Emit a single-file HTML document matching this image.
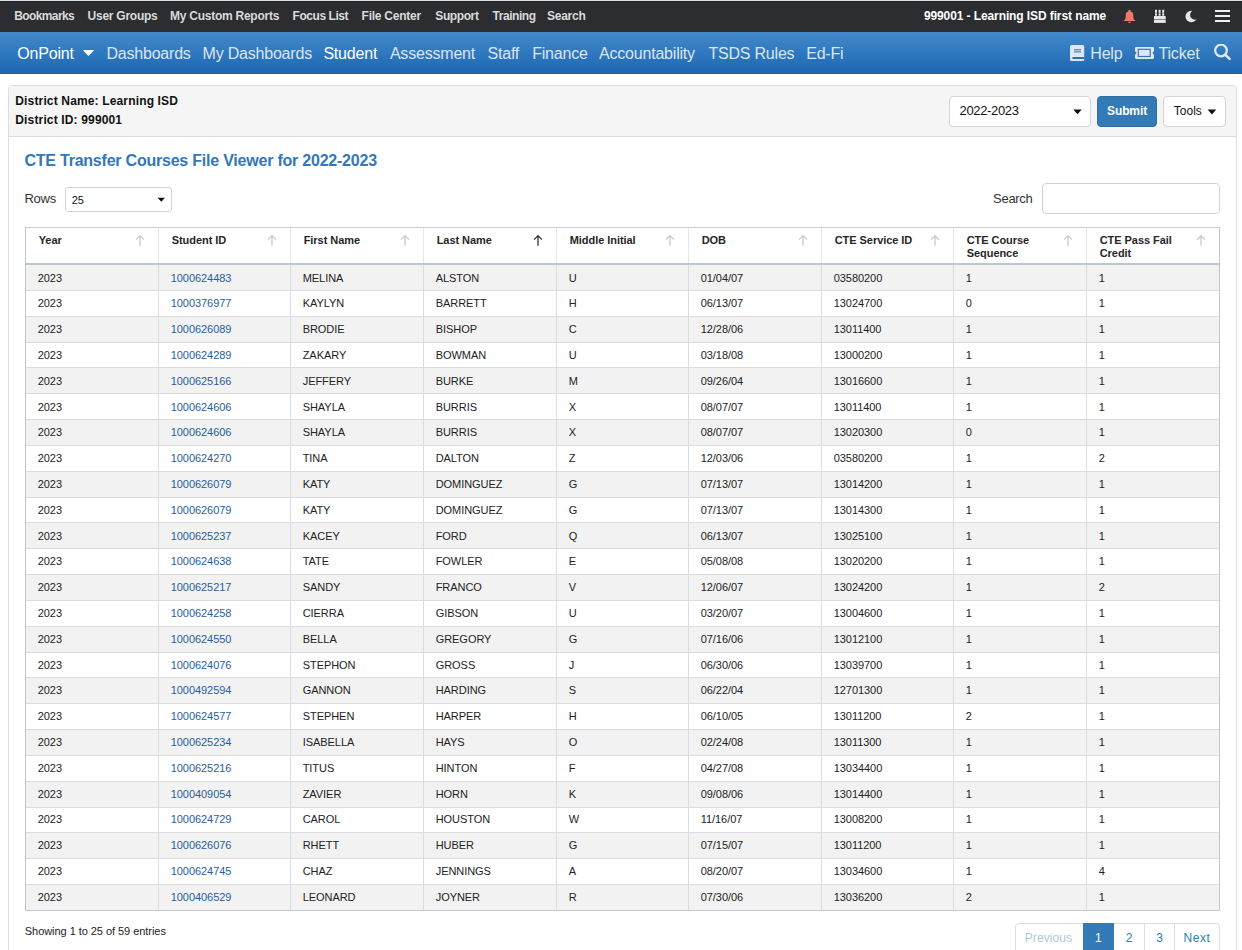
<!DOCTYPE html><html><head><meta charset="utf-8"><style>
html,body{margin:0;padding:0;}
body{width:1242px;height:950px;overflow:hidden;position:relative;background:#fff;font-family:"Liberation Sans",sans-serif;}
.t{position:absolute;white-space:pre;}
.r{position:absolute;box-sizing:border-box;}
svg{position:absolute;}
</style></head><body>
<div class="r" style="left:0px;top:0px;width:1242px;height:1px;background:#e1e1e1"></div>
<div class="r" style="left:0px;top:1px;width:1242px;height:1px;background:#222327"></div>
<div class="r" style="left:0px;top:2px;width:1242px;height:30px;background:#2c2d31"></div>
<div class="t" style="left:14.2px;top:9px;font-size:12px;line-height:14px;font-weight:700;color:#dadada;letter-spacing:-0.6px;">Bookmarks</div>
<div class="t" style="left:87.6px;top:9px;font-size:12px;line-height:14px;font-weight:700;color:#dadada;letter-spacing:-0.25px;">User Groups</div>
<div class="t" style="left:170.0px;top:9px;font-size:12px;line-height:14px;font-weight:700;color:#dadada;letter-spacing:-0.25px;">My Custom Reports</div>
<div class="t" style="left:292.6px;top:9px;font-size:12px;line-height:14px;font-weight:700;color:#dadada;letter-spacing:-0.45px;">Focus List</div>
<div class="t" style="left:361.6px;top:9px;font-size:12px;line-height:14px;font-weight:700;color:#dadada;letter-spacing:-0.25px;">File Center</div>
<div class="t" style="left:435.3px;top:9px;font-size:12px;line-height:14px;font-weight:700;color:#dadada;letter-spacing:-0.4px;">Support</div>
<div class="t" style="left:492.5px;top:9px;font-size:12px;line-height:14px;font-weight:700;color:#dadada;letter-spacing:-0.45px;">Training</div>
<div class="t" style="left:547.0px;top:9px;font-size:12px;line-height:14px;font-weight:700;color:#dadada;letter-spacing:-0.25px;">Search</div>
<div class="t" style="left:923.9px;top:9px;font-size:12px;line-height:14px;font-weight:700;color:#ffffff;letter-spacing:-0.1px;">999001 - Learning ISD first name</div>
<svg style="left:1122.5px;top:8.8px" width="13" height="15" viewBox="0 0 13 15"><circle cx="6.5" cy="1.9" r="1.2" fill="#f07868"/><path d="M1.6 11.1C2.4 10 2.7 9 2.7 7.2V5.9C2.7 3.7 4.4 2.3 6.5 2.3S10.3 3.7 10.3 5.9V7.2C10.3 9 10.6 10 11.4 11.1L12.3 11.5V12.1H0.7V11.5Z" fill="#f07868"/><path d="M4.6 12.7H8.4L6.5 14.3Z" fill="#f07868"/></svg>
<svg style="left:1153px;top:9px" width="14" height="15" viewBox="0 0 14 15"><g fill="#e8e8ea"><rect x="2" y="0.8" width="2" height="3"/><rect x="5.6" y="0.8" width="2" height="3"/><rect x="9.2" y="0.8" width="2" height="3"/><rect x="2" y="4.3" width="2" height="2.4"/><rect x="5.6" y="4.3" width="2" height="2.4"/><rect x="9.2" y="4.3" width="2" height="2.4"/><rect x="1" y="7" width="11.7" height="3"/><rect x="1" y="10.9" width="11.7" height="3"/></g><g fill="#9a9a9c"><rect x="1" y="10.1" width="11.7" height="0.8"/></g></svg>
<svg style="left:1185px;top:10px" width="13" height="14" viewBox="0 0 13 14"><circle cx="6.3" cy="6.5" r="5.8" fill="#e8e8ea"/><circle cx="10" cy="4.9" r="4.9" fill="#2c2d31"/></svg>
<div class="r" style="left:1215px;top:10px;width:15px;height:2.2px;background:#f0f0f0"></div>
<div class="r" style="left:1215px;top:15px;width:15px;height:2.2px;background:#f0f0f0"></div>
<div class="r" style="left:1215px;top:20px;width:15px;height:2.2px;background:#f0f0f0"></div>
<div class="r" style="left:0px;top:32px;width:1242px;height:42px;background:linear-gradient(#4389cb,#1c67b2)"></div>
<div class="r" style="left:0px;top:32px;width:1242px;height:1px;background:#3f8ad0"></div>
<div class="r" style="left:0px;top:73px;width:1242px;height:1px;background:#1a63ad"></div>
<div class="t" style="left:17.3px;top:45px;font-size:16px;line-height:17px;font-weight:400;color:#ffffff;letter-spacing:-0.2px;">OnPoint</div>
<div class="t" style="left:106.39999999999999px;top:45px;font-size:16px;line-height:17px;font-weight:400;color:#dde5ee;letter-spacing:-0.2px;">Dashboards</div>
<div class="t" style="left:202.5px;top:45px;font-size:16px;line-height:17px;font-weight:400;color:#dde5ee;letter-spacing:-0.2px;">My Dashboards</div>
<div class="t" style="left:323.40000000000003px;top:45px;font-size:16px;line-height:17px;font-weight:400;color:#ffffff;letter-spacing:-0.2px;">Student</div>
<div class="t" style="left:389.90000000000003px;top:45px;font-size:16px;line-height:17px;font-weight:400;color:#dde5ee;letter-spacing:-0.2px;">Assessment</div>
<div class="t" style="left:487.5px;top:45px;font-size:16px;line-height:17px;font-weight:400;color:#dde5ee;letter-spacing:-0.2px;">Staff</div>
<div class="t" style="left:532.1999999999999px;top:45px;font-size:16px;line-height:17px;font-weight:400;color:#dde5ee;letter-spacing:-0.2px;">Finance</div>
<div class="t" style="left:599.0px;top:45px;font-size:16px;line-height:17px;font-weight:400;color:#dde5ee;letter-spacing:-0.2px;">Accountability</div>
<div class="t" style="left:708.4px;top:45px;font-size:16px;line-height:17px;font-weight:400;color:#dde5ee;letter-spacing:-0.2px;">TSDS Rules</div>
<div class="t" style="left:806.1999999999999px;top:45px;font-size:16px;line-height:17px;font-weight:400;color:#dde5ee;letter-spacing:-0.2px;">Ed-Fi</div>
<div class="t" style="left:1090.3px;top:45px;font-size:16px;line-height:17px;font-weight:400;color:#dde5ee;letter-spacing:-0.2px;">Help</div>
<div class="t" style="left:1158.5px;top:45px;font-size:16px;line-height:17px;font-weight:400;color:#dde5ee;letter-spacing:-0.2px;">Ticket</div>
<svg style="left:82px;top:49px" width="13" height="8" viewBox="0 0 13 8"><path d="M0.9 1H12.1L7.2 6.5Q6.5 7.2 5.8 6.5Z" fill="#fff"/></svg>
<svg style="left:1069px;top:44px" width="17" height="18" viewBox="0 0 17 18"><rect x="1" y="1" width="14.2" height="16" rx="1.6" fill="#dfe7f1"/><rect x="5" y="5.2" width="7" height="1.1" fill="#3579bd"/><rect x="5" y="7.3" width="7" height="1.1" fill="#3579bd"/><path d="M4.3 13H15.2V15H4.3C3.7 15 3.3 14.6 3.3 14S3.7 13 4.3 13Z" fill="#2a70b8"/></svg>
<svg style="left:1134px;top:46px" width="21" height="14" viewBox="0 0 21 14"><path d="M2.2 1H18.8C19.5 1 20 1.5 20 2.2V5.6A1.4 1.4 0 0 0 20 8.4V11.8C20 12.5 19.5 13 18.8 13H2.2C1.5 13 1 12.5 1 11.8V8.4A1.4 1.4 0 0 0 1 5.6V2.2C1 1.5 1.5 1 2.2 1Z" fill="#dfe7f1"/><rect x="4.3" y="3.3" width="11.9" height="7.2" fill="none" stroke="#3a74b8" stroke-width="1.2"/></svg>
<svg style="left:1213px;top:44px" width="19" height="18" viewBox="0 0 19 18"><circle cx="8" cy="6.5" r="5.8" fill="none" stroke="#e3eaf2" stroke-width="2.2"/><path d="M12.2 10.6L16.6 14.9" stroke="#e3eaf2" stroke-width="2.5" stroke-linecap="round"/></svg>
<div class="r" style="left:8px;top:85px;width:1229px;height:900px;border:1px solid #dddddd;border-radius:4px;background:#fff"></div>
<div class="r" style="left:9px;top:86px;width:1227px;height:51px;background:#f5f5f5;border-bottom:1px solid #dddddd;border-radius:3px 3px 0 0"></div>
<div class="t" style="left:15.3px;top:94px;font-size:12px;line-height:14px;font-weight:700;color:#111;letter-spacing:0.15px;">District Name: Learning ISD</div>
<div class="t" style="left:15.3px;top:113px;font-size:12px;line-height:14px;font-weight:700;color:#111;letter-spacing:0.15px;">District ID: 999001</div>
<div class="r" style="left:949px;top:96px;width:142px;height:31px;background:#fff;border:1px solid #d4d4d4;border-radius:4px"></div>
<div class="t" style="left:959.5px;top:103px;font-size:13px;line-height:15px;font-weight:400;color:#111;letter-spacing:-0.35px;">2022-2023</div>
<svg style="left:1073px;top:108.5px" width="9" height="6" viewBox="0 0 9 6"><path d="M0.3 0.6h8.4L4.5 5.2z" fill="#111"/></svg>
<div class="r" style="left:1097px;top:96px;width:60px;height:31px;background:#337ab7;border:1px solid #2e6da4;border-radius:4px"></div>
<div class="t" style="left:1107.0px;top:104px;font-size:12px;line-height:14px;font-weight:700;color:#fff;letter-spacing:-0.1px;">Submit</div>
<div class="r" style="left:1163px;top:96px;width:63px;height:31px;background:#fff;border:1px solid #d4d4d4;border-radius:4px"></div>
<div class="t" style="left:1173.8px;top:104px;font-size:12px;line-height:14px;font-weight:400;color:#111;">Tools</div>
<svg style="left:1207px;top:108.6px" width="10" height="6" viewBox="0 0 10 6"><path d="M0.6 0.6h8.6L4.9 5.4z" fill="#111"/></svg>
<div class="t" style="left:24.4px;top:152px;font-size:16px;line-height:17px;font-weight:700;color:#3477b7;letter-spacing:-0.22px;">CTE Transfer Courses File Viewer for 2022-2023</div>
<div class="t" style="left:24.4px;top:191px;font-size:13px;line-height:15px;font-weight:400;color:#333;letter-spacing:-0.25px;">Rows</div>
<div class="r" style="left:65px;top:187px;width:107px;height:25px;background:#fff;border:1px solid #cfd4da;border-radius:3px"></div>
<div class="t" style="left:71.7px;top:194px;font-size:11px;line-height:12px;font-weight:400;color:#111;">25</div>
<svg style="left:157px;top:197px" width="9" height="6" viewBox="0 0 9 6"><path d="M0.6 0.8h7.4L4.3 4.8z" fill="#111"/></svg>
<div class="t" style="left:993.1px;top:191px;font-size:13px;line-height:15px;font-weight:400;color:#333;letter-spacing:-0.3px;">Search</div>
<div class="r" style="left:1042px;top:183px;width:178px;height:31px;background:#fff;border:1px solid #cfd4da;border-radius:4px"></div>
<div class="r" style="left:25px;top:227px;width:1195px;height:38px;background:#fff"></div>
<div class="r" style="left:25px;top:265px;width:1194px;height:25px;background:#f2f2f2"></div>
<div class="r" style="left:25px;top:317px;width:1194px;height:25px;background:#f2f2f2"></div>
<div class="r" style="left:25px;top:368px;width:1194px;height:25px;background:#f2f2f2"></div>
<div class="r" style="left:25px;top:420px;width:1194px;height:25px;background:#f2f2f2"></div>
<div class="r" style="left:25px;top:472px;width:1194px;height:25px;background:#f2f2f2"></div>
<div class="r" style="left:25px;top:523px;width:1194px;height:25px;background:#f2f2f2"></div>
<div class="r" style="left:25px;top:575px;width:1194px;height:25px;background:#f2f2f2"></div>
<div class="r" style="left:25px;top:627px;width:1194px;height:25px;background:#f2f2f2"></div>
<div class="r" style="left:25px;top:678px;width:1194px;height:25px;background:#f2f2f2"></div>
<div class="r" style="left:25px;top:730px;width:1194px;height:25px;background:#f2f2f2"></div>
<div class="r" style="left:25px;top:782px;width:1194px;height:25px;background:#f2f2f2"></div>
<div class="r" style="left:25px;top:833px;width:1194px;height:25px;background:#f2f2f2"></div>
<div class="r" style="left:25px;top:885px;width:1194px;height:25px;background:#f2f2f2"></div>
<div class="r" style="left:25px;top:290px;width:1194px;height:1px;background:#d9dde1"></div>
<div class="r" style="left:25px;top:316px;width:1194px;height:1px;background:#d9dde1"></div>
<div class="r" style="left:25px;top:342px;width:1194px;height:1px;background:#d9dde1"></div>
<div class="r" style="left:25px;top:367px;width:1194px;height:1px;background:#d9dde1"></div>
<div class="r" style="left:25px;top:393px;width:1194px;height:1px;background:#d9dde1"></div>
<div class="r" style="left:25px;top:419px;width:1194px;height:1px;background:#d9dde1"></div>
<div class="r" style="left:25px;top:445px;width:1194px;height:1px;background:#d9dde1"></div>
<div class="r" style="left:25px;top:471px;width:1194px;height:1px;background:#d9dde1"></div>
<div class="r" style="left:25px;top:497px;width:1194px;height:1px;background:#d9dde1"></div>
<div class="r" style="left:25px;top:522px;width:1194px;height:1px;background:#d9dde1"></div>
<div class="r" style="left:25px;top:548px;width:1194px;height:1px;background:#d9dde1"></div>
<div class="r" style="left:25px;top:574px;width:1194px;height:1px;background:#d9dde1"></div>
<div class="r" style="left:25px;top:600px;width:1194px;height:1px;background:#d9dde1"></div>
<div class="r" style="left:25px;top:626px;width:1194px;height:1px;background:#d9dde1"></div>
<div class="r" style="left:25px;top:652px;width:1194px;height:1px;background:#d9dde1"></div>
<div class="r" style="left:25px;top:677px;width:1194px;height:1px;background:#d9dde1"></div>
<div class="r" style="left:25px;top:703px;width:1194px;height:1px;background:#d9dde1"></div>
<div class="r" style="left:25px;top:729px;width:1194px;height:1px;background:#d9dde1"></div>
<div class="r" style="left:25px;top:755px;width:1194px;height:1px;background:#d9dde1"></div>
<div class="r" style="left:25px;top:781px;width:1194px;height:1px;background:#d9dde1"></div>
<div class="r" style="left:25px;top:807px;width:1194px;height:1px;background:#d9dde1"></div>
<div class="r" style="left:25px;top:832px;width:1194px;height:1px;background:#d9dde1"></div>
<div class="r" style="left:25px;top:858px;width:1194px;height:1px;background:#d9dde1"></div>
<div class="r" style="left:25px;top:884px;width:1194px;height:1px;background:#d9dde1"></div>
<div class="r" style="left:158px;top:228px;width:1px;height:35px;background:#e4e7eb"></div>
<div class="r" style="left:158px;top:265px;width:1px;height:645px;background:#d9dde1"></div>
<div class="r" style="left:290px;top:228px;width:1px;height:35px;background:#e4e7eb"></div>
<div class="r" style="left:290px;top:265px;width:1px;height:645px;background:#d9dde1"></div>
<div class="r" style="left:423px;top:228px;width:1px;height:35px;background:#e4e7eb"></div>
<div class="r" style="left:423px;top:265px;width:1px;height:645px;background:#d9dde1"></div>
<div class="r" style="left:556px;top:228px;width:1px;height:35px;background:#e4e7eb"></div>
<div class="r" style="left:556px;top:265px;width:1px;height:645px;background:#d9dde1"></div>
<div class="r" style="left:688px;top:228px;width:1px;height:35px;background:#e4e7eb"></div>
<div class="r" style="left:688px;top:265px;width:1px;height:645px;background:#d9dde1"></div>
<div class="r" style="left:821px;top:228px;width:1px;height:35px;background:#e4e7eb"></div>
<div class="r" style="left:821px;top:265px;width:1px;height:645px;background:#d9dde1"></div>
<div class="r" style="left:953px;top:228px;width:1px;height:35px;background:#e4e7eb"></div>
<div class="r" style="left:953px;top:265px;width:1px;height:645px;background:#d9dde1"></div>
<div class="r" style="left:1086px;top:228px;width:1px;height:35px;background:#e4e7eb"></div>
<div class="r" style="left:1086px;top:265px;width:1px;height:645px;background:#d9dde1"></div>
<div class="r" style="left:25px;top:263px;width:1194px;height:2px;background:#bfc6cd"></div>
<div class="r" style="left:25px;top:227px;width:1px;height:684px;background:#bfc6cd"></div>
<div class="r" style="left:1219px;top:227px;width:1px;height:684px;background:#bfc6cd"></div>
<div class="r" style="left:25px;top:227px;width:1195px;height:1px;background:#c6ccd2"></div>
<div class="r" style="left:25px;top:910px;width:1195px;height:1px;background:#c6ccd2"></div>
<div class="t" style="left:38.699999999999996px;top:234px;font-size:11px;line-height:12px;font-weight:700;color:#262626;letter-spacing:-0.05px;">Year</div>
<svg style="left:135px;top:234px" width="10" height="13" viewBox="0 0 10 13"><path d="M5 2V11.8M1.1 5.6L5 1.6 8.9 5.6" fill="none" stroke="#c9c9c9" stroke-width="1.3"/></svg>
<div class="t" style="left:171.70000000000002px;top:234px;font-size:11px;line-height:12px;font-weight:700;color:#262626;letter-spacing:-0.05px;">Student ID</div>
<svg style="left:267px;top:234px" width="10" height="13" viewBox="0 0 10 13"><path d="M5 2V11.8M1.1 5.6L5 1.6 8.9 5.6" fill="none" stroke="#c9c9c9" stroke-width="1.3"/></svg>
<div class="t" style="left:303.7px;top:234px;font-size:11px;line-height:12px;font-weight:700;color:#262626;letter-spacing:-0.05px;">First Name</div>
<svg style="left:400px;top:234px" width="10" height="13" viewBox="0 0 10 13"><path d="M5 2V11.8M1.1 5.6L5 1.6 8.9 5.6" fill="none" stroke="#c9c9c9" stroke-width="1.3"/></svg>
<div class="t" style="left:436.7px;top:234px;font-size:11px;line-height:12px;font-weight:700;color:#262626;letter-spacing:-0.05px;">Last Name</div>
<svg style="left:533px;top:234px" width="10" height="13" viewBox="0 0 10 13"><path d="M5 2V11.8M1.1 5.6L5 1.6 8.9 5.6" fill="none" stroke="#333" stroke-width="1.3"/></svg>
<div class="t" style="left:569.6999999999999px;top:234px;font-size:11px;line-height:12px;font-weight:700;color:#262626;letter-spacing:-0.05px;">Middle Initial</div>
<svg style="left:665px;top:234px" width="10" height="13" viewBox="0 0 10 13"><path d="M5 2V11.8M1.1 5.6L5 1.6 8.9 5.6" fill="none" stroke="#c9c9c9" stroke-width="1.3"/></svg>
<div class="t" style="left:701.6999999999999px;top:234px;font-size:11px;line-height:12px;font-weight:700;color:#262626;letter-spacing:-0.05px;">DOB</div>
<svg style="left:798px;top:234px" width="10" height="13" viewBox="0 0 10 13"><path d="M5 2V11.8M1.1 5.6L5 1.6 8.9 5.6" fill="none" stroke="#c9c9c9" stroke-width="1.3"/></svg>
<div class="t" style="left:834.6999999999999px;top:234px;font-size:11px;line-height:12px;font-weight:700;color:#262626;letter-spacing:-0.05px;">CTE Service ID</div>
<svg style="left:930px;top:234px" width="10" height="13" viewBox="0 0 10 13"><path d="M5 2V11.8M1.1 5.6L5 1.6 8.9 5.6" fill="none" stroke="#c9c9c9" stroke-width="1.3"/></svg>
<div class="t" style="left:966.6999999999999px;top:234px;font-size:11px;line-height:12px;font-weight:700;color:#262626;letter-spacing:-0.05px;">CTE Course</div>
<div class="t" style="left:966.6999999999999px;top:247px;font-size:11px;line-height:12px;font-weight:700;color:#262626;letter-spacing:-0.05px;">Sequence</div>
<svg style="left:1063px;top:234px" width="10" height="13" viewBox="0 0 10 13"><path d="M5 2V11.8M1.1 5.6L5 1.6 8.9 5.6" fill="none" stroke="#c9c9c9" stroke-width="1.3"/></svg>
<div class="t" style="left:1099.7px;top:234px;font-size:11px;line-height:12px;font-weight:700;color:#262626;letter-spacing:-0.05px;">CTE Pass Fail</div>
<div class="t" style="left:1099.7px;top:247px;font-size:11px;line-height:12px;font-weight:700;color:#262626;letter-spacing:-0.05px;">Credit</div>
<svg style="left:1196px;top:234px" width="10" height="13" viewBox="0 0 10 13"><path d="M5 2V11.8M1.1 5.6L5 1.6 8.9 5.6" fill="none" stroke="#c9c9c9" stroke-width="1.3"/></svg>
<div class="t" style="left:37.7px;top:272px;font-size:11px;line-height:12px;font-weight:400;color:#222;letter-spacing:-0.05px;">2023</div>
<div class="t" style="left:170.7px;top:272px;font-size:11px;line-height:12px;font-weight:400;color:#275e9c;letter-spacing:-0.05px;">1000624483</div>
<div class="t" style="left:302.7px;top:272px;font-size:11px;line-height:12px;font-weight:400;color:#222;letter-spacing:-0.05px;">MELINA</div>
<div class="t" style="left:435.7px;top:272px;font-size:11px;line-height:12px;font-weight:400;color:#222;letter-spacing:-0.05px;">ALSTON</div>
<div class="t" style="left:568.7px;top:272px;font-size:11px;line-height:12px;font-weight:400;color:#222;letter-spacing:-0.05px;">U</div>
<div class="t" style="left:700.7px;top:272px;font-size:11px;line-height:12px;font-weight:400;color:#222;letter-spacing:-0.05px;">01/04/07</div>
<div class="t" style="left:833.7px;top:272px;font-size:11px;line-height:12px;font-weight:400;color:#222;letter-spacing:-0.05px;">03580200</div>
<div class="t" style="left:965.7px;top:272px;font-size:11px;line-height:12px;font-weight:400;color:#222;letter-spacing:-0.05px;">1</div>
<div class="t" style="left:1098.7px;top:272px;font-size:11px;line-height:12px;font-weight:400;color:#222;letter-spacing:-0.05px;">1</div>
<div class="t" style="left:37.7px;top:297px;font-size:11px;line-height:12px;font-weight:400;color:#222;letter-spacing:-0.05px;">2023</div>
<div class="t" style="left:170.7px;top:297px;font-size:11px;line-height:12px;font-weight:400;color:#275e9c;letter-spacing:-0.05px;">1000376977</div>
<div class="t" style="left:302.7px;top:297px;font-size:11px;line-height:12px;font-weight:400;color:#222;letter-spacing:-0.05px;">KAYLYN</div>
<div class="t" style="left:435.7px;top:297px;font-size:11px;line-height:12px;font-weight:400;color:#222;letter-spacing:-0.05px;">BARRETT</div>
<div class="t" style="left:568.7px;top:297px;font-size:11px;line-height:12px;font-weight:400;color:#222;letter-spacing:-0.05px;">H</div>
<div class="t" style="left:700.7px;top:297px;font-size:11px;line-height:12px;font-weight:400;color:#222;letter-spacing:-0.05px;">06/13/07</div>
<div class="t" style="left:833.7px;top:297px;font-size:11px;line-height:12px;font-weight:400;color:#222;letter-spacing:-0.05px;">13024700</div>
<div class="t" style="left:965.7px;top:297px;font-size:11px;line-height:12px;font-weight:400;color:#222;letter-spacing:-0.05px;">0</div>
<div class="t" style="left:1098.7px;top:297px;font-size:11px;line-height:12px;font-weight:400;color:#222;letter-spacing:-0.05px;">1</div>
<div class="t" style="left:37.7px;top:323px;font-size:11px;line-height:12px;font-weight:400;color:#222;letter-spacing:-0.05px;">2023</div>
<div class="t" style="left:170.7px;top:323px;font-size:11px;line-height:12px;font-weight:400;color:#275e9c;letter-spacing:-0.05px;">1000626089</div>
<div class="t" style="left:302.7px;top:323px;font-size:11px;line-height:12px;font-weight:400;color:#222;letter-spacing:-0.05px;">BRODIE</div>
<div class="t" style="left:435.7px;top:323px;font-size:11px;line-height:12px;font-weight:400;color:#222;letter-spacing:-0.05px;">BISHOP</div>
<div class="t" style="left:568.7px;top:323px;font-size:11px;line-height:12px;font-weight:400;color:#222;letter-spacing:-0.05px;">C</div>
<div class="t" style="left:700.7px;top:323px;font-size:11px;line-height:12px;font-weight:400;color:#222;letter-spacing:-0.05px;">12/28/06</div>
<div class="t" style="left:833.7px;top:323px;font-size:11px;line-height:12px;font-weight:400;color:#222;letter-spacing:-0.05px;">13011400</div>
<div class="t" style="left:965.7px;top:323px;font-size:11px;line-height:12px;font-weight:400;color:#222;letter-spacing:-0.05px;">1</div>
<div class="t" style="left:1098.7px;top:323px;font-size:11px;line-height:12px;font-weight:400;color:#222;letter-spacing:-0.05px;">1</div>
<div class="t" style="left:37.7px;top:349px;font-size:11px;line-height:12px;font-weight:400;color:#222;letter-spacing:-0.05px;">2023</div>
<div class="t" style="left:170.7px;top:349px;font-size:11px;line-height:12px;font-weight:400;color:#275e9c;letter-spacing:-0.05px;">1000624289</div>
<div class="t" style="left:302.7px;top:349px;font-size:11px;line-height:12px;font-weight:400;color:#222;letter-spacing:-0.05px;">ZAKARY</div>
<div class="t" style="left:435.7px;top:349px;font-size:11px;line-height:12px;font-weight:400;color:#222;letter-spacing:-0.05px;">BOWMAN</div>
<div class="t" style="left:568.7px;top:349px;font-size:11px;line-height:12px;font-weight:400;color:#222;letter-spacing:-0.05px;">U</div>
<div class="t" style="left:700.7px;top:349px;font-size:11px;line-height:12px;font-weight:400;color:#222;letter-spacing:-0.05px;">03/18/08</div>
<div class="t" style="left:833.7px;top:349px;font-size:11px;line-height:12px;font-weight:400;color:#222;letter-spacing:-0.05px;">13000200</div>
<div class="t" style="left:965.7px;top:349px;font-size:11px;line-height:12px;font-weight:400;color:#222;letter-spacing:-0.05px;">1</div>
<div class="t" style="left:1098.7px;top:349px;font-size:11px;line-height:12px;font-weight:400;color:#222;letter-spacing:-0.05px;">1</div>
<div class="t" style="left:37.7px;top:375px;font-size:11px;line-height:12px;font-weight:400;color:#222;letter-spacing:-0.05px;">2023</div>
<div class="t" style="left:170.7px;top:375px;font-size:11px;line-height:12px;font-weight:400;color:#275e9c;letter-spacing:-0.05px;">1000625166</div>
<div class="t" style="left:302.7px;top:375px;font-size:11px;line-height:12px;font-weight:400;color:#222;letter-spacing:-0.05px;">JEFFERY</div>
<div class="t" style="left:435.7px;top:375px;font-size:11px;line-height:12px;font-weight:400;color:#222;letter-spacing:-0.05px;">BURKE</div>
<div class="t" style="left:568.7px;top:375px;font-size:11px;line-height:12px;font-weight:400;color:#222;letter-spacing:-0.05px;">M</div>
<div class="t" style="left:700.7px;top:375px;font-size:11px;line-height:12px;font-weight:400;color:#222;letter-spacing:-0.05px;">09/26/04</div>
<div class="t" style="left:833.7px;top:375px;font-size:11px;line-height:12px;font-weight:400;color:#222;letter-spacing:-0.05px;">13016600</div>
<div class="t" style="left:965.7px;top:375px;font-size:11px;line-height:12px;font-weight:400;color:#222;letter-spacing:-0.05px;">1</div>
<div class="t" style="left:1098.7px;top:375px;font-size:11px;line-height:12px;font-weight:400;color:#222;letter-spacing:-0.05px;">1</div>
<div class="t" style="left:37.7px;top:401px;font-size:11px;line-height:12px;font-weight:400;color:#222;letter-spacing:-0.05px;">2023</div>
<div class="t" style="left:170.7px;top:401px;font-size:11px;line-height:12px;font-weight:400;color:#275e9c;letter-spacing:-0.05px;">1000624606</div>
<div class="t" style="left:302.7px;top:401px;font-size:11px;line-height:12px;font-weight:400;color:#222;letter-spacing:-0.05px;">SHAYLA</div>
<div class="t" style="left:435.7px;top:401px;font-size:11px;line-height:12px;font-weight:400;color:#222;letter-spacing:-0.05px;">BURRIS</div>
<div class="t" style="left:568.7px;top:401px;font-size:11px;line-height:12px;font-weight:400;color:#222;letter-spacing:-0.05px;">X</div>
<div class="t" style="left:700.7px;top:401px;font-size:11px;line-height:12px;font-weight:400;color:#222;letter-spacing:-0.05px;">08/07/07</div>
<div class="t" style="left:833.7px;top:401px;font-size:11px;line-height:12px;font-weight:400;color:#222;letter-spacing:-0.05px;">13011400</div>
<div class="t" style="left:965.7px;top:401px;font-size:11px;line-height:12px;font-weight:400;color:#222;letter-spacing:-0.05px;">1</div>
<div class="t" style="left:1098.7px;top:401px;font-size:11px;line-height:12px;font-weight:400;color:#222;letter-spacing:-0.05px;">1</div>
<div class="t" style="left:37.7px;top:426px;font-size:11px;line-height:12px;font-weight:400;color:#222;letter-spacing:-0.05px;">2023</div>
<div class="t" style="left:170.7px;top:426px;font-size:11px;line-height:12px;font-weight:400;color:#275e9c;letter-spacing:-0.05px;">1000624606</div>
<div class="t" style="left:302.7px;top:426px;font-size:11px;line-height:12px;font-weight:400;color:#222;letter-spacing:-0.05px;">SHAYLA</div>
<div class="t" style="left:435.7px;top:426px;font-size:11px;line-height:12px;font-weight:400;color:#222;letter-spacing:-0.05px;">BURRIS</div>
<div class="t" style="left:568.7px;top:426px;font-size:11px;line-height:12px;font-weight:400;color:#222;letter-spacing:-0.05px;">X</div>
<div class="t" style="left:700.7px;top:426px;font-size:11px;line-height:12px;font-weight:400;color:#222;letter-spacing:-0.05px;">08/07/07</div>
<div class="t" style="left:833.7px;top:426px;font-size:11px;line-height:12px;font-weight:400;color:#222;letter-spacing:-0.05px;">13020300</div>
<div class="t" style="left:965.7px;top:426px;font-size:11px;line-height:12px;font-weight:400;color:#222;letter-spacing:-0.05px;">0</div>
<div class="t" style="left:1098.7px;top:426px;font-size:11px;line-height:12px;font-weight:400;color:#222;letter-spacing:-0.05px;">1</div>
<div class="t" style="left:37.7px;top:452px;font-size:11px;line-height:12px;font-weight:400;color:#222;letter-spacing:-0.05px;">2023</div>
<div class="t" style="left:170.7px;top:452px;font-size:11px;line-height:12px;font-weight:400;color:#275e9c;letter-spacing:-0.05px;">1000624270</div>
<div class="t" style="left:302.7px;top:452px;font-size:11px;line-height:12px;font-weight:400;color:#222;letter-spacing:-0.05px;">TINA</div>
<div class="t" style="left:435.7px;top:452px;font-size:11px;line-height:12px;font-weight:400;color:#222;letter-spacing:-0.05px;">DALTON</div>
<div class="t" style="left:568.7px;top:452px;font-size:11px;line-height:12px;font-weight:400;color:#222;letter-spacing:-0.05px;">Z</div>
<div class="t" style="left:700.7px;top:452px;font-size:11px;line-height:12px;font-weight:400;color:#222;letter-spacing:-0.05px;">12/03/06</div>
<div class="t" style="left:833.7px;top:452px;font-size:11px;line-height:12px;font-weight:400;color:#222;letter-spacing:-0.05px;">03580200</div>
<div class="t" style="left:965.7px;top:452px;font-size:11px;line-height:12px;font-weight:400;color:#222;letter-spacing:-0.05px;">1</div>
<div class="t" style="left:1098.7px;top:452px;font-size:11px;line-height:12px;font-weight:400;color:#222;letter-spacing:-0.05px;">2</div>
<div class="t" style="left:37.7px;top:478px;font-size:11px;line-height:12px;font-weight:400;color:#222;letter-spacing:-0.05px;">2023</div>
<div class="t" style="left:170.7px;top:478px;font-size:11px;line-height:12px;font-weight:400;color:#275e9c;letter-spacing:-0.05px;">1000626079</div>
<div class="t" style="left:302.7px;top:478px;font-size:11px;line-height:12px;font-weight:400;color:#222;letter-spacing:-0.05px;">KATY</div>
<div class="t" style="left:435.7px;top:478px;font-size:11px;line-height:12px;font-weight:400;color:#222;letter-spacing:-0.05px;">DOMINGUEZ</div>
<div class="t" style="left:568.7px;top:478px;font-size:11px;line-height:12px;font-weight:400;color:#222;letter-spacing:-0.05px;">G</div>
<div class="t" style="left:700.7px;top:478px;font-size:11px;line-height:12px;font-weight:400;color:#222;letter-spacing:-0.05px;">07/13/07</div>
<div class="t" style="left:833.7px;top:478px;font-size:11px;line-height:12px;font-weight:400;color:#222;letter-spacing:-0.05px;">13014200</div>
<div class="t" style="left:965.7px;top:478px;font-size:11px;line-height:12px;font-weight:400;color:#222;letter-spacing:-0.05px;">1</div>
<div class="t" style="left:1098.7px;top:478px;font-size:11px;line-height:12px;font-weight:400;color:#222;letter-spacing:-0.05px;">1</div>
<div class="t" style="left:37.7px;top:504px;font-size:11px;line-height:12px;font-weight:400;color:#222;letter-spacing:-0.05px;">2023</div>
<div class="t" style="left:170.7px;top:504px;font-size:11px;line-height:12px;font-weight:400;color:#275e9c;letter-spacing:-0.05px;">1000626079</div>
<div class="t" style="left:302.7px;top:504px;font-size:11px;line-height:12px;font-weight:400;color:#222;letter-spacing:-0.05px;">KATY</div>
<div class="t" style="left:435.7px;top:504px;font-size:11px;line-height:12px;font-weight:400;color:#222;letter-spacing:-0.05px;">DOMINGUEZ</div>
<div class="t" style="left:568.7px;top:504px;font-size:11px;line-height:12px;font-weight:400;color:#222;letter-spacing:-0.05px;">G</div>
<div class="t" style="left:700.7px;top:504px;font-size:11px;line-height:12px;font-weight:400;color:#222;letter-spacing:-0.05px;">07/13/07</div>
<div class="t" style="left:833.7px;top:504px;font-size:11px;line-height:12px;font-weight:400;color:#222;letter-spacing:-0.05px;">13014300</div>
<div class="t" style="left:965.7px;top:504px;font-size:11px;line-height:12px;font-weight:400;color:#222;letter-spacing:-0.05px;">1</div>
<div class="t" style="left:1098.7px;top:504px;font-size:11px;line-height:12px;font-weight:400;color:#222;letter-spacing:-0.05px;">1</div>
<div class="t" style="left:37.7px;top:530px;font-size:11px;line-height:12px;font-weight:400;color:#222;letter-spacing:-0.05px;">2023</div>
<div class="t" style="left:170.7px;top:530px;font-size:11px;line-height:12px;font-weight:400;color:#275e9c;letter-spacing:-0.05px;">1000625237</div>
<div class="t" style="left:302.7px;top:530px;font-size:11px;line-height:12px;font-weight:400;color:#222;letter-spacing:-0.05px;">KACEY</div>
<div class="t" style="left:435.7px;top:530px;font-size:11px;line-height:12px;font-weight:400;color:#222;letter-spacing:-0.05px;">FORD</div>
<div class="t" style="left:568.7px;top:530px;font-size:11px;line-height:12px;font-weight:400;color:#222;letter-spacing:-0.05px;">Q</div>
<div class="t" style="left:700.7px;top:530px;font-size:11px;line-height:12px;font-weight:400;color:#222;letter-spacing:-0.05px;">06/13/07</div>
<div class="t" style="left:833.7px;top:530px;font-size:11px;line-height:12px;font-weight:400;color:#222;letter-spacing:-0.05px;">13025100</div>
<div class="t" style="left:965.7px;top:530px;font-size:11px;line-height:12px;font-weight:400;color:#222;letter-spacing:-0.05px;">1</div>
<div class="t" style="left:1098.7px;top:530px;font-size:11px;line-height:12px;font-weight:400;color:#222;letter-spacing:-0.05px;">1</div>
<div class="t" style="left:37.7px;top:555px;font-size:11px;line-height:12px;font-weight:400;color:#222;letter-spacing:-0.05px;">2023</div>
<div class="t" style="left:170.7px;top:555px;font-size:11px;line-height:12px;font-weight:400;color:#275e9c;letter-spacing:-0.05px;">1000624638</div>
<div class="t" style="left:302.7px;top:555px;font-size:11px;line-height:12px;font-weight:400;color:#222;letter-spacing:-0.05px;">TATE</div>
<div class="t" style="left:435.7px;top:555px;font-size:11px;line-height:12px;font-weight:400;color:#222;letter-spacing:-0.05px;">FOWLER</div>
<div class="t" style="left:568.7px;top:555px;font-size:11px;line-height:12px;font-weight:400;color:#222;letter-spacing:-0.05px;">E</div>
<div class="t" style="left:700.7px;top:555px;font-size:11px;line-height:12px;font-weight:400;color:#222;letter-spacing:-0.05px;">05/08/08</div>
<div class="t" style="left:833.7px;top:555px;font-size:11px;line-height:12px;font-weight:400;color:#222;letter-spacing:-0.05px;">13020200</div>
<div class="t" style="left:965.7px;top:555px;font-size:11px;line-height:12px;font-weight:400;color:#222;letter-spacing:-0.05px;">1</div>
<div class="t" style="left:1098.7px;top:555px;font-size:11px;line-height:12px;font-weight:400;color:#222;letter-spacing:-0.05px;">1</div>
<div class="t" style="left:37.7px;top:581px;font-size:11px;line-height:12px;font-weight:400;color:#222;letter-spacing:-0.05px;">2023</div>
<div class="t" style="left:170.7px;top:581px;font-size:11px;line-height:12px;font-weight:400;color:#275e9c;letter-spacing:-0.05px;">1000625217</div>
<div class="t" style="left:302.7px;top:581px;font-size:11px;line-height:12px;font-weight:400;color:#222;letter-spacing:-0.05px;">SANDY</div>
<div class="t" style="left:435.7px;top:581px;font-size:11px;line-height:12px;font-weight:400;color:#222;letter-spacing:-0.05px;">FRANCO</div>
<div class="t" style="left:568.7px;top:581px;font-size:11px;line-height:12px;font-weight:400;color:#222;letter-spacing:-0.05px;">V</div>
<div class="t" style="left:700.7px;top:581px;font-size:11px;line-height:12px;font-weight:400;color:#222;letter-spacing:-0.05px;">12/06/07</div>
<div class="t" style="left:833.7px;top:581px;font-size:11px;line-height:12px;font-weight:400;color:#222;letter-spacing:-0.05px;">13024200</div>
<div class="t" style="left:965.7px;top:581px;font-size:11px;line-height:12px;font-weight:400;color:#222;letter-spacing:-0.05px;">1</div>
<div class="t" style="left:1098.7px;top:581px;font-size:11px;line-height:12px;font-weight:400;color:#222;letter-spacing:-0.05px;">2</div>
<div class="t" style="left:37.7px;top:607px;font-size:11px;line-height:12px;font-weight:400;color:#222;letter-spacing:-0.05px;">2023</div>
<div class="t" style="left:170.7px;top:607px;font-size:11px;line-height:12px;font-weight:400;color:#275e9c;letter-spacing:-0.05px;">1000624258</div>
<div class="t" style="left:302.7px;top:607px;font-size:11px;line-height:12px;font-weight:400;color:#222;letter-spacing:-0.05px;">CIERRA</div>
<div class="t" style="left:435.7px;top:607px;font-size:11px;line-height:12px;font-weight:400;color:#222;letter-spacing:-0.05px;">GIBSON</div>
<div class="t" style="left:568.7px;top:607px;font-size:11px;line-height:12px;font-weight:400;color:#222;letter-spacing:-0.05px;">U</div>
<div class="t" style="left:700.7px;top:607px;font-size:11px;line-height:12px;font-weight:400;color:#222;letter-spacing:-0.05px;">03/20/07</div>
<div class="t" style="left:833.7px;top:607px;font-size:11px;line-height:12px;font-weight:400;color:#222;letter-spacing:-0.05px;">13004600</div>
<div class="t" style="left:965.7px;top:607px;font-size:11px;line-height:12px;font-weight:400;color:#222;letter-spacing:-0.05px;">1</div>
<div class="t" style="left:1098.7px;top:607px;font-size:11px;line-height:12px;font-weight:400;color:#222;letter-spacing:-0.05px;">1</div>
<div class="t" style="left:37.7px;top:633px;font-size:11px;line-height:12px;font-weight:400;color:#222;letter-spacing:-0.05px;">2023</div>
<div class="t" style="left:170.7px;top:633px;font-size:11px;line-height:12px;font-weight:400;color:#275e9c;letter-spacing:-0.05px;">1000624550</div>
<div class="t" style="left:302.7px;top:633px;font-size:11px;line-height:12px;font-weight:400;color:#222;letter-spacing:-0.05px;">BELLA</div>
<div class="t" style="left:435.7px;top:633px;font-size:11px;line-height:12px;font-weight:400;color:#222;letter-spacing:-0.05px;">GREGORY</div>
<div class="t" style="left:568.7px;top:633px;font-size:11px;line-height:12px;font-weight:400;color:#222;letter-spacing:-0.05px;">G</div>
<div class="t" style="left:700.7px;top:633px;font-size:11px;line-height:12px;font-weight:400;color:#222;letter-spacing:-0.05px;">07/16/06</div>
<div class="t" style="left:833.7px;top:633px;font-size:11px;line-height:12px;font-weight:400;color:#222;letter-spacing:-0.05px;">13012100</div>
<div class="t" style="left:965.7px;top:633px;font-size:11px;line-height:12px;font-weight:400;color:#222;letter-spacing:-0.05px;">1</div>
<div class="t" style="left:1098.7px;top:633px;font-size:11px;line-height:12px;font-weight:400;color:#222;letter-spacing:-0.05px;">1</div>
<div class="t" style="left:37.7px;top:659px;font-size:11px;line-height:12px;font-weight:400;color:#222;letter-spacing:-0.05px;">2023</div>
<div class="t" style="left:170.7px;top:659px;font-size:11px;line-height:12px;font-weight:400;color:#275e9c;letter-spacing:-0.05px;">1000624076</div>
<div class="t" style="left:302.7px;top:659px;font-size:11px;line-height:12px;font-weight:400;color:#222;letter-spacing:-0.05px;">STEPHON</div>
<div class="t" style="left:435.7px;top:659px;font-size:11px;line-height:12px;font-weight:400;color:#222;letter-spacing:-0.05px;">GROSS</div>
<div class="t" style="left:568.7px;top:659px;font-size:11px;line-height:12px;font-weight:400;color:#222;letter-spacing:-0.05px;">J</div>
<div class="t" style="left:700.7px;top:659px;font-size:11px;line-height:12px;font-weight:400;color:#222;letter-spacing:-0.05px;">06/30/06</div>
<div class="t" style="left:833.7px;top:659px;font-size:11px;line-height:12px;font-weight:400;color:#222;letter-spacing:-0.05px;">13039700</div>
<div class="t" style="left:965.7px;top:659px;font-size:11px;line-height:12px;font-weight:400;color:#222;letter-spacing:-0.05px;">1</div>
<div class="t" style="left:1098.7px;top:659px;font-size:11px;line-height:12px;font-weight:400;color:#222;letter-spacing:-0.05px;">1</div>
<div class="t" style="left:37.7px;top:684px;font-size:11px;line-height:12px;font-weight:400;color:#222;letter-spacing:-0.05px;">2023</div>
<div class="t" style="left:170.7px;top:684px;font-size:11px;line-height:12px;font-weight:400;color:#275e9c;letter-spacing:-0.05px;">1000492594</div>
<div class="t" style="left:302.7px;top:684px;font-size:11px;line-height:12px;font-weight:400;color:#222;letter-spacing:-0.05px;">GANNON</div>
<div class="t" style="left:435.7px;top:684px;font-size:11px;line-height:12px;font-weight:400;color:#222;letter-spacing:-0.05px;">HARDING</div>
<div class="t" style="left:568.7px;top:684px;font-size:11px;line-height:12px;font-weight:400;color:#222;letter-spacing:-0.05px;">S</div>
<div class="t" style="left:700.7px;top:684px;font-size:11px;line-height:12px;font-weight:400;color:#222;letter-spacing:-0.05px;">06/22/04</div>
<div class="t" style="left:833.7px;top:684px;font-size:11px;line-height:12px;font-weight:400;color:#222;letter-spacing:-0.05px;">12701300</div>
<div class="t" style="left:965.7px;top:684px;font-size:11px;line-height:12px;font-weight:400;color:#222;letter-spacing:-0.05px;">1</div>
<div class="t" style="left:1098.7px;top:684px;font-size:11px;line-height:12px;font-weight:400;color:#222;letter-spacing:-0.05px;">1</div>
<div class="t" style="left:37.7px;top:710px;font-size:11px;line-height:12px;font-weight:400;color:#222;letter-spacing:-0.05px;">2023</div>
<div class="t" style="left:170.7px;top:710px;font-size:11px;line-height:12px;font-weight:400;color:#275e9c;letter-spacing:-0.05px;">1000624577</div>
<div class="t" style="left:302.7px;top:710px;font-size:11px;line-height:12px;font-weight:400;color:#222;letter-spacing:-0.05px;">STEPHEN</div>
<div class="t" style="left:435.7px;top:710px;font-size:11px;line-height:12px;font-weight:400;color:#222;letter-spacing:-0.05px;">HARPER</div>
<div class="t" style="left:568.7px;top:710px;font-size:11px;line-height:12px;font-weight:400;color:#222;letter-spacing:-0.05px;">H</div>
<div class="t" style="left:700.7px;top:710px;font-size:11px;line-height:12px;font-weight:400;color:#222;letter-spacing:-0.05px;">06/10/05</div>
<div class="t" style="left:833.7px;top:710px;font-size:11px;line-height:12px;font-weight:400;color:#222;letter-spacing:-0.05px;">13011200</div>
<div class="t" style="left:965.7px;top:710px;font-size:11px;line-height:12px;font-weight:400;color:#222;letter-spacing:-0.05px;">2</div>
<div class="t" style="left:1098.7px;top:710px;font-size:11px;line-height:12px;font-weight:400;color:#222;letter-spacing:-0.05px;">1</div>
<div class="t" style="left:37.7px;top:736px;font-size:11px;line-height:12px;font-weight:400;color:#222;letter-spacing:-0.05px;">2023</div>
<div class="t" style="left:170.7px;top:736px;font-size:11px;line-height:12px;font-weight:400;color:#275e9c;letter-spacing:-0.05px;">1000625234</div>
<div class="t" style="left:302.7px;top:736px;font-size:11px;line-height:12px;font-weight:400;color:#222;letter-spacing:-0.05px;">ISABELLA</div>
<div class="t" style="left:435.7px;top:736px;font-size:11px;line-height:12px;font-weight:400;color:#222;letter-spacing:-0.05px;">HAYS</div>
<div class="t" style="left:568.7px;top:736px;font-size:11px;line-height:12px;font-weight:400;color:#222;letter-spacing:-0.05px;">O</div>
<div class="t" style="left:700.7px;top:736px;font-size:11px;line-height:12px;font-weight:400;color:#222;letter-spacing:-0.05px;">02/24/08</div>
<div class="t" style="left:833.7px;top:736px;font-size:11px;line-height:12px;font-weight:400;color:#222;letter-spacing:-0.05px;">13011300</div>
<div class="t" style="left:965.7px;top:736px;font-size:11px;line-height:12px;font-weight:400;color:#222;letter-spacing:-0.05px;">1</div>
<div class="t" style="left:1098.7px;top:736px;font-size:11px;line-height:12px;font-weight:400;color:#222;letter-spacing:-0.05px;">1</div>
<div class="t" style="left:37.7px;top:762px;font-size:11px;line-height:12px;font-weight:400;color:#222;letter-spacing:-0.05px;">2023</div>
<div class="t" style="left:170.7px;top:762px;font-size:11px;line-height:12px;font-weight:400;color:#275e9c;letter-spacing:-0.05px;">1000625216</div>
<div class="t" style="left:302.7px;top:762px;font-size:11px;line-height:12px;font-weight:400;color:#222;letter-spacing:-0.05px;">TITUS</div>
<div class="t" style="left:435.7px;top:762px;font-size:11px;line-height:12px;font-weight:400;color:#222;letter-spacing:-0.05px;">HINTON</div>
<div class="t" style="left:568.7px;top:762px;font-size:11px;line-height:12px;font-weight:400;color:#222;letter-spacing:-0.05px;">F</div>
<div class="t" style="left:700.7px;top:762px;font-size:11px;line-height:12px;font-weight:400;color:#222;letter-spacing:-0.05px;">04/27/08</div>
<div class="t" style="left:833.7px;top:762px;font-size:11px;line-height:12px;font-weight:400;color:#222;letter-spacing:-0.05px;">13034400</div>
<div class="t" style="left:965.7px;top:762px;font-size:11px;line-height:12px;font-weight:400;color:#222;letter-spacing:-0.05px;">1</div>
<div class="t" style="left:1098.7px;top:762px;font-size:11px;line-height:12px;font-weight:400;color:#222;letter-spacing:-0.05px;">1</div>
<div class="t" style="left:37.7px;top:788px;font-size:11px;line-height:12px;font-weight:400;color:#222;letter-spacing:-0.05px;">2023</div>
<div class="t" style="left:170.7px;top:788px;font-size:11px;line-height:12px;font-weight:400;color:#275e9c;letter-spacing:-0.05px;">1000409054</div>
<div class="t" style="left:302.7px;top:788px;font-size:11px;line-height:12px;font-weight:400;color:#222;letter-spacing:-0.05px;">ZAVIER</div>
<div class="t" style="left:435.7px;top:788px;font-size:11px;line-height:12px;font-weight:400;color:#222;letter-spacing:-0.05px;">HORN</div>
<div class="t" style="left:568.7px;top:788px;font-size:11px;line-height:12px;font-weight:400;color:#222;letter-spacing:-0.05px;">K</div>
<div class="t" style="left:700.7px;top:788px;font-size:11px;line-height:12px;font-weight:400;color:#222;letter-spacing:-0.05px;">09/08/06</div>
<div class="t" style="left:833.7px;top:788px;font-size:11px;line-height:12px;font-weight:400;color:#222;letter-spacing:-0.05px;">13014400</div>
<div class="t" style="left:965.7px;top:788px;font-size:11px;line-height:12px;font-weight:400;color:#222;letter-spacing:-0.05px;">1</div>
<div class="t" style="left:1098.7px;top:788px;font-size:11px;line-height:12px;font-weight:400;color:#222;letter-spacing:-0.05px;">1</div>
<div class="t" style="left:37.7px;top:813px;font-size:11px;line-height:12px;font-weight:400;color:#222;letter-spacing:-0.05px;">2023</div>
<div class="t" style="left:170.7px;top:813px;font-size:11px;line-height:12px;font-weight:400;color:#275e9c;letter-spacing:-0.05px;">1000624729</div>
<div class="t" style="left:302.7px;top:813px;font-size:11px;line-height:12px;font-weight:400;color:#222;letter-spacing:-0.05px;">CAROL</div>
<div class="t" style="left:435.7px;top:813px;font-size:11px;line-height:12px;font-weight:400;color:#222;letter-spacing:-0.05px;">HOUSTON</div>
<div class="t" style="left:568.7px;top:813px;font-size:11px;line-height:12px;font-weight:400;color:#222;letter-spacing:-0.05px;">W</div>
<div class="t" style="left:700.7px;top:813px;font-size:11px;line-height:12px;font-weight:400;color:#222;letter-spacing:-0.05px;">11/16/07</div>
<div class="t" style="left:833.7px;top:813px;font-size:11px;line-height:12px;font-weight:400;color:#222;letter-spacing:-0.05px;">13008200</div>
<div class="t" style="left:965.7px;top:813px;font-size:11px;line-height:12px;font-weight:400;color:#222;letter-spacing:-0.05px;">1</div>
<div class="t" style="left:1098.7px;top:813px;font-size:11px;line-height:12px;font-weight:400;color:#222;letter-spacing:-0.05px;">1</div>
<div class="t" style="left:37.7px;top:839px;font-size:11px;line-height:12px;font-weight:400;color:#222;letter-spacing:-0.05px;">2023</div>
<div class="t" style="left:170.7px;top:839px;font-size:11px;line-height:12px;font-weight:400;color:#275e9c;letter-spacing:-0.05px;">1000626076</div>
<div class="t" style="left:302.7px;top:839px;font-size:11px;line-height:12px;font-weight:400;color:#222;letter-spacing:-0.05px;">RHETT</div>
<div class="t" style="left:435.7px;top:839px;font-size:11px;line-height:12px;font-weight:400;color:#222;letter-spacing:-0.05px;">HUBER</div>
<div class="t" style="left:568.7px;top:839px;font-size:11px;line-height:12px;font-weight:400;color:#222;letter-spacing:-0.05px;">G</div>
<div class="t" style="left:700.7px;top:839px;font-size:11px;line-height:12px;font-weight:400;color:#222;letter-spacing:-0.05px;">07/15/07</div>
<div class="t" style="left:833.7px;top:839px;font-size:11px;line-height:12px;font-weight:400;color:#222;letter-spacing:-0.05px;">13011200</div>
<div class="t" style="left:965.7px;top:839px;font-size:11px;line-height:12px;font-weight:400;color:#222;letter-spacing:-0.05px;">1</div>
<div class="t" style="left:1098.7px;top:839px;font-size:11px;line-height:12px;font-weight:400;color:#222;letter-spacing:-0.05px;">1</div>
<div class="t" style="left:37.7px;top:865px;font-size:11px;line-height:12px;font-weight:400;color:#222;letter-spacing:-0.05px;">2023</div>
<div class="t" style="left:170.7px;top:865px;font-size:11px;line-height:12px;font-weight:400;color:#275e9c;letter-spacing:-0.05px;">1000624745</div>
<div class="t" style="left:302.7px;top:865px;font-size:11px;line-height:12px;font-weight:400;color:#222;letter-spacing:-0.05px;">CHAZ</div>
<div class="t" style="left:435.7px;top:865px;font-size:11px;line-height:12px;font-weight:400;color:#222;letter-spacing:-0.05px;">JENNINGS</div>
<div class="t" style="left:568.7px;top:865px;font-size:11px;line-height:12px;font-weight:400;color:#222;letter-spacing:-0.05px;">A</div>
<div class="t" style="left:700.7px;top:865px;font-size:11px;line-height:12px;font-weight:400;color:#222;letter-spacing:-0.05px;">08/20/07</div>
<div class="t" style="left:833.7px;top:865px;font-size:11px;line-height:12px;font-weight:400;color:#222;letter-spacing:-0.05px;">13034600</div>
<div class="t" style="left:965.7px;top:865px;font-size:11px;line-height:12px;font-weight:400;color:#222;letter-spacing:-0.05px;">1</div>
<div class="t" style="left:1098.7px;top:865px;font-size:11px;line-height:12px;font-weight:400;color:#222;letter-spacing:-0.05px;">4</div>
<div class="t" style="left:37.7px;top:891px;font-size:11px;line-height:12px;font-weight:400;color:#222;letter-spacing:-0.05px;">2023</div>
<div class="t" style="left:170.7px;top:891px;font-size:11px;line-height:12px;font-weight:400;color:#275e9c;letter-spacing:-0.05px;">1000406529</div>
<div class="t" style="left:302.7px;top:891px;font-size:11px;line-height:12px;font-weight:400;color:#222;letter-spacing:-0.05px;">LEONARD</div>
<div class="t" style="left:435.7px;top:891px;font-size:11px;line-height:12px;font-weight:400;color:#222;letter-spacing:-0.05px;">JOYNER</div>
<div class="t" style="left:568.7px;top:891px;font-size:11px;line-height:12px;font-weight:400;color:#222;letter-spacing:-0.05px;">R</div>
<div class="t" style="left:700.7px;top:891px;font-size:11px;line-height:12px;font-weight:400;color:#222;letter-spacing:-0.05px;">07/30/06</div>
<div class="t" style="left:833.7px;top:891px;font-size:11px;line-height:12px;font-weight:400;color:#222;letter-spacing:-0.05px;">13036200</div>
<div class="t" style="left:965.7px;top:891px;font-size:11px;line-height:12px;font-weight:400;color:#222;letter-spacing:-0.05px;">2</div>
<div class="t" style="left:1098.7px;top:891px;font-size:11px;line-height:12px;font-weight:400;color:#222;letter-spacing:-0.05px;">1</div>
<div class="t" style="left:24.799999999999997px;top:925px;font-size:11px;line-height:12px;font-weight:400;color:#222;letter-spacing:-0.05px;">Showing 1 to 25 of 59 entries</div>
<div class="r" style="left:1015px;top:923px;width:205px;height:40px;background:#fff;border:1px solid #dddddd;border-radius:4px"></div>
<div class="r" style="left:1083px;top:923px;width:31px;height:40px;background:#337ab7;border:1px solid #337ab7"></div>
<div class="r" style="left:1144px;top:924px;width:1px;height:40px;background:#dddddd"></div>
<div class="r" style="left:1174px;top:924px;width:1px;height:40px;background:#dddddd"></div>
<div class="t" style="left:1024.6999999999998px;top:931px;font-size:12px;line-height:14px;font-weight:400;color:#a9cbd9;letter-spacing:0.1px;">Previous</div>
<div class="t" style="left:1094.9px;top:931px;font-size:12px;line-height:14px;font-weight:400;color:#ffffff;">1</div>
<div class="t" style="left:1125.7px;top:931px;font-size:12px;line-height:14px;font-weight:400;color:#2a7fab;">2</div>
<div class="t" style="left:1156.2px;top:931px;font-size:12px;line-height:14px;font-weight:400;color:#2a7fab;">3</div>
<div class="t" style="left:1183.4px;top:931px;font-size:12px;line-height:14px;font-weight:400;color:#2a7fab;letter-spacing:0.6px;">Next</div>
</body></html>
